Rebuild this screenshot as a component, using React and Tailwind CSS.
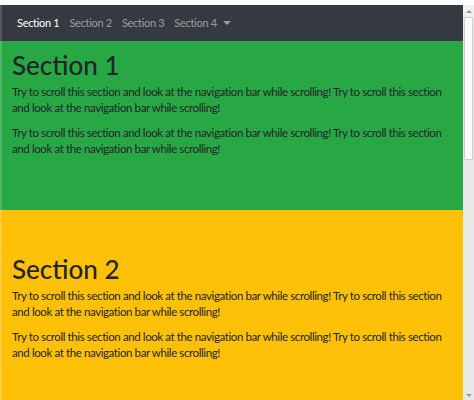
import React from "react";

const text =
  "Try to scroll this section and look at the navigation bar while scrolling! Try to scroll this section and look at the navigation bar while scrolling!";

const links = ["Section 1", "Section 2", "Section 3"];

function Section({ title, bg, edge, top, height }) {
  return (
    <section className={`${bg} ${edge} ${top} ${height} border-l-2 pl-[10px] pr-[12px] text-[#212529]`}>
      <h1 className="text-[26px] leading-[30px] font-medium mb-[4px]">{title}</h1>
      <p className="text-[11.5px] tracking-[-0.4px] leading-[16px] mb-[9px]">{text}</p>
      <p className="text-[11.5px] tracking-[-0.4px] leading-[16px]">{text}</p>
    </section>
  );
}

export default function App() {
  return (
    <div className="w-[474px] h-[400px] overflow-hidden bg-white pt-[5px] flex font-['Lato',sans-serif]">
      <div className="flex-1 flex flex-col">
        <nav className="h-[36px] shrink-0 bg-[#343a40] border-l-2 border-[#55595e] flex items-center pl-[15px] gap-[10px] text-[11px] tracking-[-0.3px]">
          {links.map((l, i) => (
            <span key={l} className={i === 0 ? "text-white" : "text-white/50"}>
              {l}
            </span>
          ))}
          <span className="text-white/50 flex items-center gap-[6px]">
            Section 4
            <span className="w-0 h-0 border-l-[4px] border-r-[4px] border-t-[4px] border-l-transparent border-r-transparent border-t-white/50" />
          </span>
        </nav>
        <Section title="Section 1" bg="bg-[#28a745]" edge="border-[#4db564]" top="pt-[9px]" height="h-[169px] shrink-0" />
        <Section title="Section 2" bg="bg-[#ffc107]" edge="border-[#ffcd3a]" top="pt-[44px]" height="flex-1" />
      </div>
      <div className="w-[11px] shrink-0 bg-[#e9e9e9] flex flex-col">
        <div className="h-[12px] flex items-center justify-center bg-[#f0f0f0]">
          <span className="w-0 h-0 border-l-[3px] border-r-[3px] border-b-[3px] border-l-transparent border-r-transparent border-b-[#999]" />
        </div>
        <div className="mx-[1px] h-[143px] bg-[#fafafa] border border-[#cfcfcf] rounded-[1px]" />
        <div className="flex-1" />
        <div className="h-[10px] flex items-center justify-center">
          <span className="w-0 h-0 border-l-[3px] border-r-[3px] border-t-[3px] border-l-transparent border-r-transparent border-t-[#999]" />
        </div>
      </div>
    </div>
  );
}
